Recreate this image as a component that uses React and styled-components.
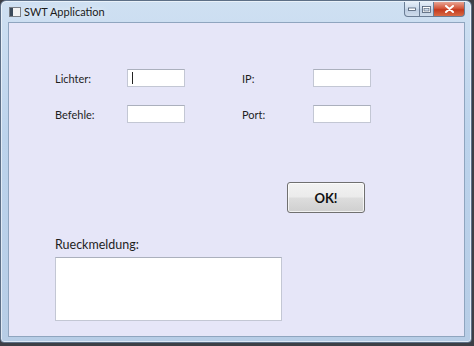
import React from "react";
import styled, { createGlobalStyle } from "styled-components";

const Global = createGlobalStyle`
  html, body { margin: 0; padding: 0; }
  body {
    width: 474px; height: 346px; overflow: hidden;
    background: #3d3f46;
    font-family: Lato, "Open Sans", sans-serif;
  }
`;

const Frame = styled.div`
  box-sizing: border-box;
  width: 472px;
  height: 343px;
  border: 1px solid #5d6f86;
  border-radius: 6px 6px 4px 4px;
  background: linear-gradient(180deg, #cfe0f2 0%, #bcd3ec 40%, #b7cde6 100%);
  box-shadow: inset 0 0 0 1px rgba(255,255,255,0.55);
  display: flex;
  flex-direction: column;
  padding: 0 6px 5px 7px;
`;

const TitleBar = styled.div`
  height: 21px;
  display: flex;
  align-items: center;
`;

const AppIcon = styled.div`
  box-sizing: border-box;
  width: 12px;
  height: 10px;
  margin: 1px 3px 0 1px;
  border: 1px solid #7a7f86;
  background: linear-gradient(90deg, #3b4a5a 0 3px, #f2f2f2 3px);
`;

const Title = styled.span`
  font-family: Lato, "Open Sans", sans-serif;
  font-size: 11px;
  color: #1a1a1a;
  text-shadow: 0 0 6px rgba(255,255,255,0.9);
`;

const Controls = styled.div`
  margin-left: auto;
  display: flex;
  align-self: flex-start;
  margin-top: 1px;
`;

const CtlBtn = styled.div`
  box-sizing: border-box;
  width: ${(p) => p.$w}px;
  height: 15px;
  border: 1px solid #6a7d95;
  border-top: none;
  border-radius: ${(p) => p.$r};
  background: ${(p) =>
    p.$close
      ? "linear-gradient(180deg, #e8a493 0%, #d4573b 45%, #c53a1e 55%, #d86a45 100%)"
      : "linear-gradient(180deg, #e5eef8 0%, #cddbec 45%, #bccde2 55%, #cfdcec 100%)"};
  display: flex;
  align-items: center;
  justify-content: center;
  margin-left: -1px;
`;

const Client = styled.div`
  flex: 1;
  background: #e6e6f8;
  border: 1px solid #8fa5bf;
  display: flex;
  flex-direction: column;
  padding: 46px 0 0 46px;
`;

const FormGrid = styled.div`
  display: grid;
  grid-template-columns: 72px 58px 57px 71px 58px;
  grid-auto-rows: 18px;
  row-gap: 18px;
  align-items: center;
`;

const Label = styled.label`
  font-size: ${(p) => p.$size || 11}px;
  color: #1e1e1e;
  line-height: 1;
`;

const Input = styled.div`
  box-sizing: border-box;
  height: 18px;
  background: #ffffff;
  border: 1px solid #c3c7d4;
  border-top-color: #abb0bd;
  display: flex;
  align-items: center;
  padding-left: 4px;
`;

const Caret = styled.span`
  width: 1px;
  height: 12px;
  background: #222;
`;

const OkButton = styled.button`
  box-sizing: border-box;
  width: 78px;
  height: 31px;
  margin: 59px 0 0 232px;
  border: 1px solid #707070;
  border-radius: 3px;
  background: linear-gradient(180deg, #f2f2f2 0%, #ebebeb 48%, #dddddd 52%, #cfcfcf 100%);
  box-shadow: inset 0 0 0 1px rgba(255,255,255,0.7);
  font-family: Lato, "Open Sans", sans-serif;
  font-weight: 700;
  font-size: 13px;
  color: #111;
  padding: 0;
`;

const FeedbackLabel = styled(Label)`
  margin-top: 23px;
  display: block;
  height: 17px;
  line-height: 17px;
`;

const TextArea = styled.div`
  box-sizing: border-box;
  width: 227px;
  height: 64px;
  margin-top: 4px;
  background: #ffffff;
  border: 1px solid #c3c7d4;
  border-top-color: #abb0bd;
`;

export default function App() {
  return (
    <>
      <Global />
      <Frame>
        <TitleBar>
          <AppIcon />
          <Title>SWT Application</Title>
          <Controls>
            <CtlBtn $w={16} $r="0 0 0 4px">
              <svg width="8" height="4" viewBox="0 0 8 4">
                <rect x="0.5" y="1" width="7" height="2.5" fill="#fff" stroke="#4a5a70" strokeWidth="0.8" />
              </svg>
            </CtlBtn>
            <CtlBtn $w={15} $r="0">
              <svg width="9" height="7" viewBox="0 0 9 7">
                <rect x="0.5" y="0.5" width="8" height="6" fill="#fff" stroke="#4a5a70" strokeWidth="0.8" />
                <rect x="2" y="2.5" width="5" height="2.5" fill="#cddbec" stroke="#4a5a70" strokeWidth="0.6" />
              </svg>
            </CtlBtn>
            <CtlBtn $w={32} $r="0 0 4px 0" $close>
              <svg width="9" height="8" viewBox="0 0 9 8">
                <path d="M1 1 L8 7 M8 1 L1 7" stroke="#fff" strokeWidth="2" strokeLinecap="round" />
              </svg>
            </CtlBtn>
          </Controls>
        </TitleBar>
        <Client>
          <FormGrid>
            <Label>Lichter:</Label>
            <Input><Caret /></Input>
            <span />
            <Label>IP:</Label>
            <Input />
            <Label>Befehle:</Label>
            <Input />
            <span />
            <Label>Port:</Label>
            <Input />
          </FormGrid>
          <OkButton>OK!</OkButton>
          <FeedbackLabel $size={12.5}>Rueckmeldung:</FeedbackLabel>
          <TextArea />
        </Client>
      </Frame>
    </>
  );
}
